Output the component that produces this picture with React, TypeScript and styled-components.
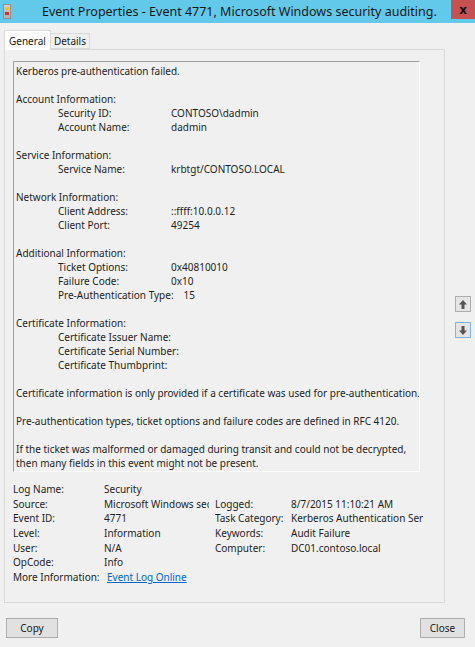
import React from 'react';
import styled, { createGlobalStyle } from 'styled-components';

const GlobalStyle = createGlobalStyle`
    html, body {
        margin: 0;
        padding: 0;
        background: #f0f0f0;
    }
    body {
        font-family: "Noto Sans", "Open Sans", sans-serif;
        font-size: 10px;
        color: #1e1e1e;
    }
`;

const Window = styled.div`
    width: 475px;
    height: 647px;
    display: flex;
    flex-direction: column;
    background: #f0f0f0;
    overflow: hidden;
`;

const TitleBar = styled.div`
    height: 23px;
    flex: none;
    display: flex;
    align-items: flex-start;
    background: #62c9eb;
`;

const AppIcon = styled.div`
    flex: none;
    width: 6px;
    height: 13px;
    margin: 4px 0 0 3px;
    border: 1px solid #9a8c8c;
    background: linear-gradient(#d6cfcf, #b8aeae);
    position: relative;
    &::before, &::after {
        content: '';
        position: absolute;
        left: 1px;
        width: 4px;
        height: 3px;
    }
    &::before { top: 2px; background: #e8c030; }
    &::after { top: 7px; background: #d03030; }
`;

const TitleText = styled.div`
    flex: 1;
    min-width: 0;
    overflow: hidden;
    padding: 3px 0 0 31px;
    font-size: 12.5px;
    line-height: 17px;
    color: #1a1a1a;
    white-space: nowrap;
`;

const CloseX = styled.div`
    flex: none;
    width: 24px;
    height: 19px;
    background: #c75050;
    color: #111;
    font-family: "DejaVu Sans", sans-serif;
    font-weight: bold;
    font-size: 12px;
    display: flex;
    align-items: center;
    justify-content: center;
`;

const Body = styled.div`
    flex: 1;
    display: flex;
    flex-direction: column;
    padding: 7px 0 0 4px;
`;

const MainRow = styled.div`
    display: flex;
`;

const TabArea = styled.div`
    width: 441px;
    flex: none;
    display: flex;
    flex-direction: column;
`;

const TabStrip = styled.div`
    display: flex;
    align-items: flex-end;
    height: 20px;
    position: relative;
    z-index: 1;
    margin-bottom: -1px;
`;

const Tab = styled.div<{ $active?: boolean }>`
    height: ${p => (p.$active ? '20px' : '16px')};
    padding: 0 ${p => (p.$active ? '4px' : '3px')};
    margin-bottom: ${p => (p.$active ? '0' : '1px')};
    box-sizing: border-box;
    border: 1px solid #d9d9d9;
    border-bottom: ${p => (p.$active ? 'none' : '1px solid #d9d9d9')};
    background: ${p => (p.$active ? '#ffffff' : '#f0f0f0')};
    margin-left: ${p => (p.$active ? '0' : '-1px')};
    display: flex;
    align-items: center;
    color: #1a1a1a;
`;

const TabPanel = styled.div`
    height: 554px;
    box-sizing: border-box;
    border: 1px solid #d9d9d9;
    background: #f0f0f0;
    padding: 11px 0 0 8px;
    display: flex;
    flex-direction: column;
`;

const DescBox = styled.div`
    width: 407px;
    height: 411px;
    box-sizing: border-box;
    border-top: 1px solid #a0a0a0;
    border-left: 1px solid #a0a0a0;
    border-right: 1px solid #ffffff;
    border-bottom: 1px solid #ffffff;
    padding: 2px 2px 0 2px;
    line-height: 14px;
    overflow: hidden;
`;

const Line = styled.div<{ $indent?: boolean }>`
    display: flex;
    height: 14px;
    white-space: nowrap;
    padding-left: ${p => (p.$indent ? '42px' : '0')};
`;

const Blank = styled.div`
    height: 14px;
`;

const Label = styled.span`
    min-width: 103px;
    margin-right: 10px;
    flex: none;
`;

const Fields = styled.div`
    margin-top: 10px;
    display: grid;
    grid-template-columns: 91px 105px 6px 76px 132px;
    grid-auto-rows: 14.7px;
    line-height: 14.7px;
    white-space: nowrap;
`;

const Cell = styled.div<{ $col: number; $row: number }>`
    grid-column: ${p => p.$col};
    grid-row: ${p => p.$row};
    overflow: hidden;
`;

const Link = styled.a`
    color: #0066cc;
    text-decoration: underline;
    padding-left: 3px;
    cursor: pointer;
`;

const SideColumn = styled.div`
    display: flex;
    flex-direction: column;
    gap: 10px;
    padding: 266px 0 0 10px;
`;

const ArrowButton = styled.div<{ $focused?: boolean }>`
    width: 16px;
    height: 16px;
    box-sizing: border-box;
    border: 1px solid ${p => (p.$focused ? '#7eb4ea' : '#adadad')};
    background: #e5e5e5;
    display: flex;
    align-items: center;
    justify-content: center;
`;

const Footer = styled.div`
    display: flex;
    justify-content: space-between;
    padding: 15px 10px 0 2px;
`;

const Button = styled.div<{ $width: number }>`
    width: ${p => p.$width}px;
    height: 20px;
    box-sizing: border-box;
    border: 1px solid #adadad;
    background: #e1e1e1;
    display: flex;
    align-items: center;
    justify-content: center;
    color: #1a1a1a;
`;

const Arrow = ({ up }: { up?: boolean }) => (
    <svg width="8" height="9" viewBox="0 0 8 9">
        <path
            d={up ? 'M4 0 L8 4.5 L5.5 4.5 L5.5 9 L2.5 9 L2.5 4.5 L0 4.5 Z' : 'M4 9 L8 4.5 L5.5 4.5 L5.5 0 L2.5 0 L2.5 4.5 L0 4.5 Z'}
            fill="#555"
        />
    </svg>
);

type Pair = [string, string];

const sections: { title: string; items: Pair[] }[] = [
    { title: 'Account Information:', items: [['Security ID:', 'CONTOSO\\dadmin'], ['Account Name:', 'dadmin']] },
    { title: 'Service Information:', items: [['Service Name:', 'krbtgt/CONTOSO.LOCAL']] },
    { title: 'Network Information:', items: [['Client Address:', '::ffff:10.0.0.12'], ['Client Port:', '49254']] },
    {
        title: 'Additional Information:',
        items: [['Ticket Options:', '0x40810010'], ['Failure Code:', '0x10'], ['Pre-Authentication Type:', '15']],
    },
    {
        title: 'Certificate Information:',
        items: [['Certificate Issuer Name:', ''], ['Certificate Serial Number:', ''], ['Certificate Thumbprint:', '']],
    },
];

const leftFields: Pair[] = [
    ['Log Name:', 'Security'],
    ['Source:', 'Microsoft Windows security auditing.'],
    ['Event ID:', '4771'],
    ['Level:', 'Information'],
    ['User:', 'N/A'],
    ['OpCode:', 'Info'],
];

const rightFields: Pair[] = [
    ['Logged:', '8/7/2015 11:10:21 AM'],
    ['Task Category:', 'Kerberos Authentication Service'],
    ['Keywords:', 'Audit Failure'],
    ['Computer:', 'DC01.contoso.local'],
];

export default function App() {
    return (
        <Window>
            <GlobalStyle />
            <TitleBar>
                <AppIcon />
                <TitleText>Event Properties - Event 4771, Microsoft Windows security auditing.</TitleText>
                <CloseX>x</CloseX>
            </TitleBar>
            <Body>
                <MainRow>
                    <TabArea>
                        <TabStrip>
                            <Tab $active>General</Tab>
                            <Tab>Details</Tab>
                        </TabStrip>
                        <TabPanel>
                            <DescBox>
                                <Line>Kerberos pre-authentication failed.</Line>
                                <Blank />
                                {sections.map(s => (
                                    <React.Fragment key={s.title}>
                                        <Line>{s.title}</Line>
                                        {s.items.map(([k, v]) => (
                                            <Line $indent key={k}>
                                                <Label>{k}</Label>
                                                <span>{v}</span>
                                            </Line>
                                        ))}
                                        <Blank />
                                    </React.Fragment>
                                ))}
                                <Line>Certificate information is only provided if a certificate was used for pre-authentication.</Line>
                                <Blank />
                                <Line>Pre-authentication types, ticket options and failure codes are defined in RFC 4120.</Line>
                                <Blank />
                                <Line>If the ticket was malformed or damaged during transit and could not be decrypted,</Line>
                                <Line>then many fields in this event might not be present.</Line>
                            </DescBox>
                            <Fields>
                                {leftFields.map(([k, v], i) => (
                                    <React.Fragment key={k}>
                                        <Cell $col={1} $row={i + 1}>{k}</Cell>
                                        <Cell $col={2} $row={i + 1}>{v}</Cell>
                                    </React.Fragment>
                                ))}
                                {rightFields.map(([k, v], i) => (
                                    <React.Fragment key={k}>
                                        <Cell $col={4} $row={i + 2}>{k}</Cell>
                                        <Cell $col={5} $row={i + 2}>{v}</Cell>
                                    </React.Fragment>
                                ))}
                                <Cell $col={1} $row={7}>More Information:</Cell>
                                <Cell $col={2} $row={7}>
                                    <Link>Event Log Online</Link>
                                </Cell>
                            </Fields>
                        </TabPanel>
                    </TabArea>
                    <SideColumn>
                        <ArrowButton>
                            <Arrow up />
                        </ArrowButton>
                        <ArrowButton $focused>
                            <Arrow />
                        </ArrowButton>
                    </SideColumn>
                </MainRow>
                <Footer>
                    <Button $width={52}>Copy</Button>
                    <Button $width={45}>Close</Button>
                </Footer>
            </Body>
        </Window>
    );
}
